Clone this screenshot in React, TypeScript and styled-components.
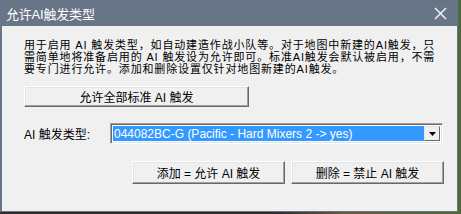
// 允许AI触发类型 对话框
import styled, { createGlobalStyle } from "styled-components";

const GlobalStyle = createGlobalStyle`
  html, body {
    margin: 0;
    padding: 0;
    width: 461px;
    height: 214px;
    overflow: hidden;
    background: #3c4a36;
  }
  * {
    box-sizing: border-box;
  }
`;

const FONT = `"Liberation Sans", "Noto Sans CJK SC", sans-serif`;

const App = () => {
  return (
    <Desktop>
      <GlobalStyle />
      <Window>
        <TitleBar>
          <TitleText>允许AI触发类型</TitleText>
          <CloseButton aria-label="关闭">
            <svg width="13" height="13" viewBox="0 0 13 13">
              <path d="M1 1 L12 12 M12 1 L1 12" stroke="#ffffff" strokeWidth="1.3" fill="none" />
            </svg>
          </CloseButton>
        </TitleBar>

        <Body>
          <Description>
            <Line>用于启用 AI 触发类型，如自动建造作战小队等。对于地图中新建的AI触发，只</Line>
            <Line>需简单地将准备启用的 AI 触发设为允许即可。标准AI触发会默认被启用，不需</Line>
            <Line>要专门进行允许。添加和删除设置仅针对地图新建的AI触发。</Line>
          </Description>

          <TopButton>
            <ClassicButton $width={225} $height={21}>允许全部标准 AI 触发</ClassicButton>
          </TopButton>

          <TypeRow>
            <TypeLabel>AI 触发类型:</TypeLabel>
            <ComboBox>
              <ComboValue>044082BC-G (Pacific - Hard Mixers 2 -&gt; yes)</ComboValue>
              <ComboArrow>
                <svg width="7" height="4" viewBox="0 0 7 4">
                  <path d="M0 0 H7 L3.5 4 Z" fill="#000000" />
                </svg>
              </ComboArrow>
            </ComboBox>
          </TypeRow>

          <ActionRow>
            <ClassicButton $width={153} $height={23}>添加 = 允许 AI 触发</ClassicButton>
            <ClassicButton $width={153} $height={23}>删除 = 禁止 AI 触发</ClassicButton>
          </ActionRow>
        </Body>
      </Window>
    </Desktop>
  );
};

export default App;

// 스타일
const Desktop = styled.div`
  width: 461px;
  height: 214px;
  display: flex;
  align-items: flex-start;
  background: linear-gradient(90deg, #2d2d2d 0%, #2d2d2d 60%, #6a5a3e 75%, #4d6a3a 100%);
`;

const Window = styled.div`
  width: 458px;
  height: 212px;
  display: flex;
  flex-direction: column;
  background: #677587;
  padding: 0 1px 1px 2px;
`;

const TitleBar = styled.div`
  height: 26px;
  display: flex;
  align-items: center;
  justify-content: space-between;
  padding: 0 9px 0 4px;
  color: #ffffff;
`;

const TitleText = styled.span`
  font-family: ${FONT};
  font-size: 13px;
  letter-spacing: -0.2px;
`;

const CloseButton = styled.div`
  width: 15px;
  height: 15px;
  display: flex;
  align-items: center;
  justify-content: center;
`;

const Body = styled.div`
  flex: 1;
  background: #f0f0f0;
  padding: 13px 12px 0 22px;
  display: flex;
  flex-direction: column;
  align-items: flex-start;
`;

const Description = styled.div`
  font-family: ${FONT};
  font-size: 11px;
  line-height: 12px;
  color: #000000;
`;

const Line = styled.div`
  height: 12px;
  white-space: nowrap;
  letter-spacing: 0.85px;
`;

const TopButton = styled.div`
  margin-top: 11px;
`;

const ClassicButton = styled.div<{ $width: number; $height: number }>`
  width: ${({ $width }) => $width}px;
  height: ${({ $height }) => $height}px;
  display: flex;
  align-items: center;
  justify-content: center;
  font-family: ${FONT};
  font-size: 12px;
  color: #000000;
  background: #f0f0f0;
  border-top: 1px solid #ffffff;
  border-left: 1px solid #ffffff;
  border-right: 1px solid #696969;
  border-bottom: 1px solid #696969;
  box-shadow: inset -1px -1px 0 #a0a0a0, inset 1px 1px 0 #e3e3e3;
`;

const TypeRow = styled.div`
  margin-top: 16px;
  display: flex;
  align-items: center;
  width: 100%;
`;

const TypeLabel = styled.span`
  width: 86px;
  font-family: ${FONT};
  font-size: 12px;
  color: #000000;
  white-space: nowrap;
`;

const ComboBox = styled.div`
  width: 333px;
  height: 21px;
  display: flex;
  align-items: stretch;
  background: #ffffff;
  border-top: 1px solid #a0a0a0;
  border-left: 1px solid #a0a0a0;
  border-right: 1px solid #ffffff;
  border-bottom: 1px solid #ffffff;
  box-shadow: inset 1px 1px 0 #696969, inset -1px -1px 0 #e3e3e3;
  padding: 2px;
`;

const ComboValue = styled.div`
  flex: 1;
  display: flex;
  align-items: center;
  padding-left: 1px;
  background: #3399ff;
  color: #ffffff;
  font-family: ${FONT};
  font-size: 12px;
  white-space: nowrap;
  overflow: hidden;
`;

const ComboArrow = styled.div`
  width: 16px;
  display: flex;
  align-items: center;
  justify-content: center;
  background: #f0f0f0;
  border-top: 1px solid #e3e3e3;
  border-left: 1px solid #e3e3e3;
  border-right: 1px solid #696969;
  border-bottom: 1px solid #696969;
`;

const ActionRow = styled.div`
  margin-top: 17px;
  margin-left: 108px;
  display: flex;
  gap: 6px;
`;
